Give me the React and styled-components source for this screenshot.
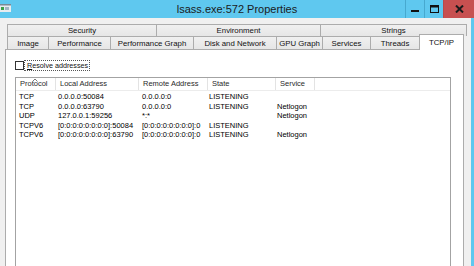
import React from "react";
import styled, { createGlobalStyle } from "styled-components";

const GlobalStyle = createGlobalStyle`
  html, body { margin: 0; padding: 0; background: #f0f0f0; }
  body { font-family: "Liberation Sans", Arial, sans-serif; }
`;

const CYAN = "#5fc8ef";

const Window = styled.div`
  width: 474px;
  height: 266px;
  overflow: hidden;
  display: flex;
  flex-direction: column;
  background: #f0f0f0;
`;

const TitleBar = styled.div`
  flex: none;
  height: 18px;
  background: ${CYAN};
  display: grid;
  grid-template-columns: 1fr auto 1fr;
`;

const TitleLeft = styled.div`
  display: flex;
  align-items: flex-start;
  padding-top: 4px;
`;

const TitleText = styled.div`
  font-size: 11px;
  line-height: 18px;
  color: #1b1b1b;
  white-space: nowrap;
`;

const Controls = styled.div`
  display: flex;
  justify-content: flex-end;
  align-items: flex-start;
`;

const CtrlButton = styled.div`
  box-sizing: border-box;
  width: ${(p) => p.$w}px;
  height: 18px;
  display: flex;
  align-items: center;
  justify-content: center;
  background: ${(p) => (p.$close ? "#c75050" : "transparent")};
  border-left: 1px solid ${(p) => (p.$close ? "#b94a4a" : "#47a9cf")};
`;

const Frame = styled.div`
  flex: 1;
  min-height: 0;
  display: flex;
  padding: 6px 7px 0 5px;
  border-right: 3px solid ${CYAN};
`;

const TabControl = styled.div`
  width: 459px;
  display: flex;
  flex-direction: column;
`;

const TabRow = styled.div`
  display: flex;
  align-items: flex-end;
  height: ${(p) => p.$h}px;
  padding-left: 2px;
  flex: none;
`;

const Tab = styled.div`
  box-sizing: border-box;
  flex: none;
  width: ${(p) => p.$w}px;
  height: ${(p) => (p.$selected ? p.$h + 3 : p.$h)}px;
  margin-bottom: ${(p) => (p.$selected ? -1 : 0)}px;
  position: relative;
  z-index: ${(p) => (p.$selected ? 2 : 1)};
  border-top: 1px solid #acacac;
  border-left: 1px solid #acacac;
  background: ${(p) =>
    p.$selected ? "#ffffff" : "linear-gradient(#f0f0f0, #e6e6e6)"};
  font-size: 7.8px;
  color: #111;
  display: flex;
  align-items: ${(p) => (p.$selected ? "flex-start" : "center")};
  padding-top: ${(p) => (p.$selected ? 3 : 0)}px;
  justify-content: center;
  white-space: nowrap;
  &:last-child {
    border-right: 1px solid #acacac;
  }
`;

const TabPage = styled.div`
  flex: 1;
  min-height: 0;
  background: #ffffff;
  border: 1px solid #acacac;
  border-bottom: none;
  padding: 10px 0 0 9px;
  display: flex;
  flex-direction: column;
  align-items: flex-start;
`;

const CheckRow = styled.label`
  display: flex;
  align-items: center;
  height: 11px;
`;

const CheckBox = styled.span`
  box-sizing: border-box;
  width: 9px;
  height: 9px;
  border: 1px solid #333;
  background: #fff;
`;

const CheckLabel = styled.span`
  font-size: 7.2px;
  line-height: 9px;
  padding: 0 1px 0 2px;
  border: 1px dotted #555;
  color: #111;
  white-space: nowrap;
  u { text-decoration: underline; }
`;

const ListView = styled.div`
  box-sizing: border-box;
  margin-top: 6px;
  width: 436px;
  height: 220px;
  flex: none;
  border: 1px solid #a3a3a3;
  border-bottom: none;
  background: #fff;
`;

const COLS = "40px 83px 69px 68px 39px";

const HeaderRow = styled.div`
  box-sizing: border-box;
  display: grid;
  grid-template-columns: ${COLS};
  height: 13px;
  border-bottom: 1px solid #ececec;
`;

const HeaderCell = styled.div`
  position: relative;
  box-sizing: border-box;
  border-right: 1px solid #e3e3e3;
  font-size: 7.5px;
  line-height: 12px;
  padding-left: 4px;
  color: #2a2a2a;
  white-space: nowrap;
`;

const SortArrow = styled.svg`
  position: absolute;
  left: 16px;
  top: 0px;
`;

const Body = styled.div`
  padding-top: 1px;
`;

const DataRow = styled.div`
  display: grid;
  grid-template-columns: ${COLS};
  height: 9.6px;
`;

const Cell = styled.div`
  font-size: 7.5px;
  line-height: 9.6px;
  padding-left: ${(p) => p.$pad}px;
  color: #000;
  white-space: nowrap;
`;

const rowTabs = [
  { label: "Security", w: 149 },
  { label: "Environment", w: 164 },
  { label: "Strings", w: 147 },
];

const frontTabs = [
  { label: "Image", w: 41 },
  { label: "Performance", w: 62 },
  { label: "Performance Graph", w: 83 },
  { label: "Disk and Network", w: 83 },
  { label: "GPU Graph", w: 46 },
  { label: "Services", w: 48 },
  { label: "Threads", w: 49 },
  { label: "TCP/IP", w: 45, selected: true },
];

const headers = ["Protocol", "Local Address", "Remote Address", "State", "Service"];
const pads = [3, 2, 3, 1, 1];

const rows = [
  ["TCP", "0.0.0.0:50084", "0.0.0.0:0", "LISTENING", ""],
  ["TCP", "0.0.0.0:63790", "0.0.0.0:0", "LISTENING", "Netlogon"],
  ["UDP", "127.0.0.1:59256", "*:*", "", "Netlogon"],
  ["TCPV6", "[0:0:0:0:0:0:0:0]:50084", "[0:0:0:0:0:0:0:0]:0", "LISTENING", ""],
  ["TCPV6", "[0:0:0:0:0:0:0:0]:63790", "[0:0:0:0:0:0:0:0]:0", "LISTENING", "Netlogon"],
];

function AppIcon() {
  return (
    <svg width="11" height="8" viewBox="0 0 11 8">
      <rect x="0" y="0" width="11" height="8" fill="#e8ecef" />
      <rect x="0" y="0" width="11" height="1.5" fill="#7a8a96" />
      <rect x="1" y="3" width="3" height="3" fill="#3aa04a" />
      <rect x="5" y="3" width="4" height="3" fill="#9fb7c4" />
    </svg>
  );
}

export default function App() {
  return (
    <>
      <GlobalStyle />
      <Window>
        <TitleBar>
          <TitleLeft>
            <AppIcon />
          </TitleLeft>
          <TitleText>lsass.exe:572 Properties</TitleText>
          <Controls>
            <CtrlButton $w={19}>
              <svg width="8" height="8" viewBox="0 0 8 8">
                <rect x="0" y="5" width="8" height="2" fill="#111" />
              </svg>
            </CtrlButton>
            <CtrlButton $w={19}>
              <svg width="9" height="8" viewBox="0 0 9 8">
                <rect x="0.5" y="0.5" width="8" height="7" fill="none" stroke="#111" />
                <rect x="0" y="0" width="9" height="2.5" fill="#111" />
              </svg>
            </CtrlButton>
            <CtrlButton $w={31} $close>
              <svg width="9" height="8" viewBox="0 0 9 8">
                <path d="M1 0.5 L8 7.5 M8 0.5 L1 7.5" stroke="#1a1a1a" strokeWidth="2" />
              </svg>
            </CtrlButton>
          </Controls>
        </TitleBar>
        <Frame>
          <TabControl>
            <TabRow $h={12}>
              {rowTabs.map((t) => (
                <Tab key={t.label} $w={t.w} $h={12}>
                  {t.label}
                </Tab>
              ))}
            </TabRow>
            <TabRow $h={13}>
              {frontTabs.map((t) => (
                <Tab key={t.label} $w={t.w} $h={13} $selected={t.selected}>
                  {t.label}
                </Tab>
              ))}
            </TabRow>
            <TabPage>
              <CheckRow>
                <CheckBox />
                <CheckLabel>
                  <u>R</u>esolve addresses
                </CheckLabel>
              </CheckRow>
              <ListView>
                <HeaderRow>
                  {headers.map((h, i) => (
                    <HeaderCell key={h}>
                      {i === 0 && (
                        <SortArrow width="6" height="4" viewBox="0 0 6 4">
                          <path d="M0.5 3.5 L3 1 L5.5 3.5" fill="none" stroke="#7a7a7a" strokeWidth="1" />
                        </SortArrow>
                      )}
                      {h}
                    </HeaderCell>
                  ))}
                </HeaderRow>
                <Body>
                  {rows.map((r, ri) => (
                    <DataRow key={ri}>
                      {r.map((c, ci) => (
                        <Cell key={ci} $pad={pads[ci]}>
                          {c}
                        </Cell>
                      ))}
                    </DataRow>
                  ))}
                </Body>
              </ListView>
            </TabPage>
          </TabControl>
        </Frame>
      </Window>
    </>
  );
}
